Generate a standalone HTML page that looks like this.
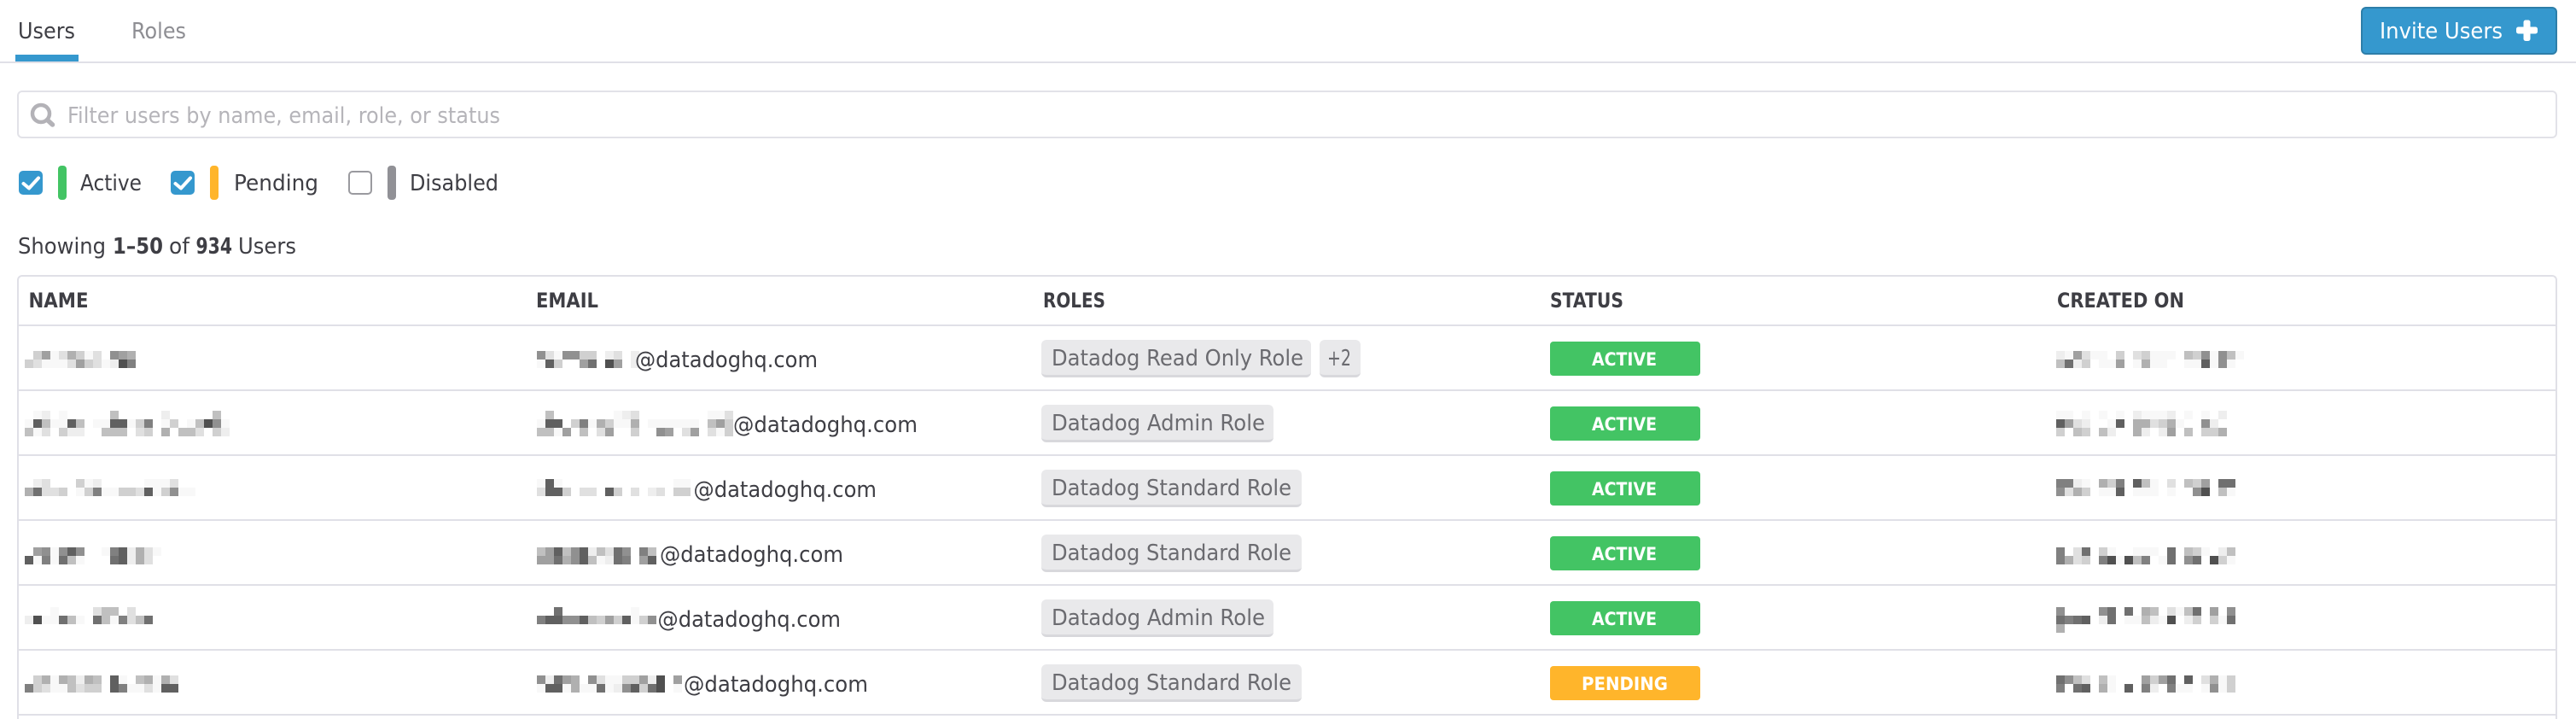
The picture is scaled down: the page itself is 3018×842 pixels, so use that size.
<!DOCTYPE html>
<html lang="en"><head><meta charset="utf-8"><title>Users</title>
<style>
html,body{margin:0;padding:0;background:#fff;width:3018px;height:842px;overflow:hidden}
.a0{position:absolute}
.l{position:absolute;left:20px;width:2976px;height:2px;background:#e0e0e7}
.tag{position:absolute;height:41px;background:#e9e9eb;border-bottom:3px solid #d8d8dc;border-radius:6px}
.st{position:absolute;left:1816px;width:176px;height:40px;border-radius:4px;background:#43c464}
.r{position:absolute;display:flex}
.r i{display:block;width:10px;height:10px;flex:none}
.a{background:#f8f8f8}.b{background:#eeeeee}.c{background:#e0e0e0}.d{background:#d0d0d0}.e{background:#c0c0c0}.f{background:#b0b0b0}.g{background:#a0a0a0}.h{background:#909090}.j{background:#808080}.k{background:#707070}.p{background:#606060}.m{background:#505050}
svg{position:absolute;left:0;top:0;display:block}
text{font-family:"DejaVu Sans","Liberation Sans",sans-serif;font-size:26px;fill:#3e3e44}
text.bd{font-weight:bold}
text.h{font-weight:bold;font-size:24px}
text.t{fill:#6b6b70}
text.s{font-weight:bold;font-size:21.5px;fill:#fff}
</style></head><body>

<div class="a0" style="left:0;top:72px;width:3018px;height:2px;background:#e0e0e7"></div>
<div class="a0" style="left:18px;top:64px;width:74px;height:8px;background:#3598ce"></div>
<div class="a0" style="left:2766px;top:8px;width:226px;height:52px;background:#3598ce;border:2px solid #2d7ea9;border-radius:6px"></div>
<div class="a0" style="left:20px;top:106px;width:2972px;height:52px;border:2px solid #e2e2e8;border-radius:6px"></div>

<div class="a0" style="left:22px;top:200px;width:28px;height:28px;background:#3598ce;border-radius:5px"></div>
<div class="a0" style="left:68px;top:194px;width:10px;height:40px;background:#43c464;border-radius:4px"></div>
<div class="a0" style="left:200px;top:200px;width:28px;height:28px;background:#3598ce;border-radius:5px"></div>
<div class="a0" style="left:246px;top:194px;width:10px;height:40px;background:#ffb52b;border-radius:4px"></div>
<div class="a0" style="left:408px;top:200px;width:24px;height:24px;border:2px solid #9a9a9f;border-radius:5px"></div>
<div class="a0" style="left:454px;top:194px;width:10px;height:40px;background:#919196;border-radius:4px"></div>

<div class="a0" style="left:20px;top:322px;width:2972px;height:518px;border:2px solid #e0e0e7;border-bottom:0;border-radius:6px 6px 0 0"></div>
<div class="l" style="top:380px"></div><div class="l" style="top:456px"></div><div class="l" style="top:532px"></div><div class="l" style="top:608px"></div><div class="l" style="top:684px"></div><div class="l" style="top:760px"></div><div class="l" style="top:836px"></div>

<div class="tag" style="left:1220px;top:398px;width:316px"></div><div class="tag" style="left:1546px;top:398px;width:48px"></div>
<div class="tag" style="left:1220px;top:474px;width:272px"></div>
<div class="tag" style="left:1220px;top:550px;width:305px"></div>
<div class="tag" style="left:1220px;top:626px;width:305px"></div>
<div class="tag" style="left:1220px;top:702px;width:272px"></div>
<div class="tag" style="left:1220px;top:778px;width:305px"></div>

<div class="st" style="top:400px"></div><div class="st" style="top:476px"></div><div class="st" style="top:552px"></div><div class="st" style="top:628px"></div><div class="st" style="top:704px"></div><div class="st" style="top:780px;background:#ffb52b"></div>

<!-- names -->
<div class="r" style="left:29px;top:411px"><i></i><i class="d"></i><i class="g"></i><i class="a"></i><i class="c"></i><i class="f"></i><i class="d"></i><i class="a"></i><i class="c"></i><i></i><i class="h"></i><i class="g"></i><i class="f"></i></div>
<div class="r" style="left:29px;top:421px"><i class="d"></i><i class="c"></i><i class="a"></i><i class="a"></i><i class="a"></i><i class="c"></i><i class="g"></i><i class="d"></i><i class="c"></i><i class="a"></i><i class="b"></i><i class="m"></i><i class="j"></i></div>

<div class="r" style="left:29px;top:481px"><i></i><i class="a"></i><i class="b"></i><i></i><i class="a"></i><i></i><i></i><i></i><i></i><i></i><i class="e"></i><i></i><i></i><i></i><i></i><i></i><i class="b"></i><i></i><i></i><i></i><i></i><i></i><i class="e"></i></div>
<div class="r" style="left:29px;top:491px"><i class="a"></i><i class="p"></i><i class="e"></i><i class="a"></i><i class="a"></i><i class="p"></i><i class="e"></i><i></i><i class="a"></i><i class="a"></i><i class="p"></i><i class="p"></i><i class="a"></i><i class="d"></i><i class="j"></i><i></i><i class="a"></i><i class="d"></i><i></i><i class="a"></i><i class="e"></i><i class="m"></i><i class="h"></i><i class="a"></i></div>
<div class="r" style="left:29px;top:501px"><i class="e"></i><i class="a"></i><i class="c"></i><i></i><i class="d"></i><i class="b"></i><i class="b"></i><i></i><i></i><i class="e"></i><i class="e"></i><i class="e"></i><i></i><i class="c"></i><i class="d"></i><i></i><i class="f"></i><i></i><i class="e"></i><i class="e"></i><i class="c"></i><i></i><i class="d"></i><i class="b"></i></div>

<div class="r" style="left:29px;top:561px"><i></i><i class="b"></i><i class="c"></i><i></i><i></i><i></i><i class="d"></i><i class="a"></i><i class="b"></i><i></i><i></i><i></i><i></i><i></i><i class="a"></i><i class="a"></i><i class="a"></i><i class="c"></i></div>
<div class="r" style="left:29px;top:571px"><i class="f"></i><i class="k"></i><i class="c"></i><i class="c"></i><i class="d"></i><i></i><i class="a"></i><i class="d"></i><i class="j"></i><i class="a"></i><i class="a"></i><i class="d"></i><i class="d"></i><i class="c"></i><i class="p"></i><i class="a"></i><i class="d"></i><i class="h"></i><i class="a"></i><i class="a"></i></div>

<div class="r" style="left:29px;top:641px"><i></i><i class="g"></i><i class="h"></i><i class="a"></i><i class="h"></i><i class="p"></i><i class="h"></i><i></i><i></i><i class="a"></i><i class="j"></i><i class="p"></i><i class="b"></i><i class="f"></i><i class="c"></i><i class="a"></i></div>
<div class="r" style="left:29px;top:651px"><i class="p"></i><i class="a"></i><i class="j"></i><i class="a"></i><i class="k"></i><i class="e"></i><i class="a"></i><i></i><i></i><i></i><i class="k"></i><i class="p"></i><i class="b"></i><i class="f"></i><i class="c"></i></div>

<div class="r" style="left:29px;top:711px"><i></i><i></i><i></i><i class="a"></i><i></i><i></i><i></i><i></i><i class="c"></i><i class="e"></i><i class="e"></i><i></i><i class="c"></i></div>
<div class="r" style="left:29px;top:721px"><i class="b"></i><i class="m"></i><i class="a"></i><i class="a"></i><i class="k"></i><i class="e"></i><i class="a"></i><i></i><i class="k"></i><i class="e"></i><i class="a"></i><i class="j"></i><i class="c"></i><i class="e"></i><i class="k"></i></div>

<div class="r" style="left:29px;top:791px"><i></i><i class="d"></i><i class="f"></i><i class="a"></i><i class="f"></i><i class="e"></i><i class="b"></i><i class="f"></i><i class="e"></i><i></i><i class="p"></i><i class="a"></i><i></i><i class="e"></i><i class="f"></i><i class="a"></i><i class="f"></i><i class="c"></i></div>
<div class="r" style="left:29px;top:801px"><i class="j"></i><i class="d"></i><i class="c"></i><i class="a"></i><i class="a"></i><i class="e"></i><i class="c"></i><i class="d"></i><i class="d"></i><i></i><i class="p"></i><i class="j"></i><i class="a"></i><i class="a"></i><i class="c"></i><i class="a"></i><i class="p"></i><i class="p"></i></div>

<!-- emails -->
<div class="r" style="left:629px;top:411px"><i class="h"></i><i class="c"></i><i class="a"></i><i class="h"></i><i class="h"></i><i class="d"></i><i class="d"></i><i></i><i class="b"></i><i class="c"></i><i></i><i class="b"></i></div>
<div class="r" style="left:629px;top:421px"><i class="a"></i><i class="p"></i><i class="d"></i><i></i><i></i><i class="g"></i><i class="k"></i><i></i><i class="m"></i><i class="g"></i><i></i><i class="b"></i></div>

<div class="r" style="left:629px;top:481px"><i></i><i class="e"></i><i></i><i></i><i></i><i></i><i></i><i></i><i></i><i class="a"></i><i class="b"></i><i class="c"></i><i></i><i></i><i></i><i></i><i></i><i></i><i></i><i></i><i class="a"></i><i class="a"></i><i class="c"></i></div>
<div class="r" style="left:629px;top:491px"><i class="a"></i><i class="p"></i><i class="p"></i><i></i><i class="d"></i><i class="j"></i><i class="a"></i><i class="f"></i><i class="d"></i><i class="a"></i><i class="a"></i><i class="f"></i><i></i><i class="a"></i><i class="a"></i><i class="a"></i><i class="a"></i><i class="a"></i><i class="a"></i><i></i><i class="e"></i><i class="g"></i><i class="d"></i></div>
<div class="r" style="left:629px;top:501px"><i class="e"></i><i class="e"></i><i class="a"></i><i class="g"></i><i></i><i class="e"></i><i></i><i class="c"></i><i class="g"></i><i></i><i></i><i class="d"></i><i></i><i></i><i class="h"></i><i class="g"></i><i></i><i class="c"></i><i class="g"></i><i></i><i class="c"></i><i class="a"></i><i class="d"></i></div>

<div class="r" style="left:629px;top:561px"><i class="a"></i><i class="p"></i><i class="a"></i><i></i><i></i><i></i><i></i><i></i><i></i><i></i><i></i><i></i><i></i><i></i><i></i><i></i><i class="a"></i><i class="a"></i></div>
<div class="r" style="left:629px;top:571px"><i class="c"></i><i class="p"></i><i class="p"></i><i class="d"></i><i></i><i class="c"></i><i class="c"></i><i></i><i class="p"></i><i class="d"></i><i></i><i class="c"></i><i></i><i class="b"></i><i class="c"></i><i></i><i class="d"></i><i class="d"></i></div>

<div class="r" style="left:629px;top:641px"><i class="e"></i><i class="g"></i><i class="p"></i><i class="e"></i><i class="h"></i><i class="p"></i><i class="b"></i><i class="e"></i><i class="c"></i><i class="k"></i><i class="h"></i><i></i><i class="j"></i><i class="e"></i></div>
<div class="r" style="left:629px;top:651px"><i class="g"></i><i class="g"></i><i class="k"></i><i class="f"></i><i class="h"></i><i class="p"></i><i class="e"></i><i class="a"></i><i class="b"></i><i class="k"></i><i class="j"></i><i></i><i class="g"></i><i class="p"></i></div>

<div class="r" style="left:629px;top:711px"><i></i><i></i><i class="k"></i><i></i><i></i><i></i><i></i><i></i><i></i><i></i><i></i><i class="a"></i></div>
<div class="r" style="left:629px;top:721px"><i class="j"></i><i class="p"></i><i class="p"></i><i class="h"></i><i class="h"></i><i class="p"></i><i class="e"></i><i class="d"></i><i class="g"></i><i class="d"></i><i class="p"></i><i class="a"></i><i class="d"></i><i class="h"></i></div>

<div class="r" style="left:629px;top:791px"><i class="h"></i><i class="b"></i><i class="k"></i><i class="g"></i><i class="f"></i><i></i><i class="h"></i><i class="c"></i><i class="a"></i><i class="a"></i><i class="d"></i><i class="d"></i><i class="g"></i><i class="b"></i><i class="m"></i><i></i><i class="g"></i></div>
<div class="r" style="left:629px;top:801px"><i class="a"></i><i class="p"></i><i class="p"></i><i class="a"></i><i class="f"></i><i class="a"></i><i class="a"></i><i class="k"></i><i class="a"></i><i class="b"></i><i class="h"></i><i class="p"></i><i class="d"></i><i class="k"></i><i class="m"></i><i></i><i class="a"></i></div>

<!-- created on -->
<div class="r" style="left:2409px;top:411px"><i class="b"></i><i class="a"></i><i class="g"></i><i class="c"></i><i class="a"></i><i class="a"></i><i></i><i class="d"></i><i></i><i class="c"></i><i class="d"></i><i class="a"></i><i class="a"></i><i class="a"></i><i></i><i class="e"></i><i class="d"></i><i class="h"></i><i class="a"></i><i class="h"></i><i class="e"></i><i class="a"></i></div>
<div class="r" style="left:2409px;top:421px"><i class="e"></i><i class="k"></i><i class="b"></i><i class="d"></i><i></i><i class="a"></i><i class="a"></i><i class="g"></i><i></i><i class="a"></i><i class="f"></i><i class="a"></i><i class="a"></i><i></i><i></i><i class="a"></i><i class="a"></i><i class="p"></i><i class="a"></i><i class="h"></i><i class="a"></i></div>

<div class="r" style="left:2409px;top:481px"><i class="a"></i><i class="a"></i><i></i><i class="a"></i><i></i><i class="a"></i><i></i><i class="a"></i><i></i><i class="b"></i><i class="a"></i><i class="a"></i><i class="a"></i><i class="b"></i><i></i><i class="a"></i><i></i><i class="a"></i><i></i><i class="b"></i></div>
<div class="r" style="left:2409px;top:491px"><i class="p"></i><i class="g"></i><i class="c"></i><i class="b"></i><i></i><i></i><i class="a"></i><i class="p"></i><i></i><i class="f"></i><i class="f"></i><i class="c"></i><i class="d"></i><i class="f"></i><i class="a"></i><i></i><i></i><i class="h"></i><i class="b"></i></div>
<div class="r" style="left:2409px;top:501px"><i class="d"></i><i></i><i class="e"></i><i class="d"></i><i></i><i class="e"></i><i class="b"></i><i></i><i></i><i class="f"></i><i class="b"></i><i></i><i class="b"></i><i class="g"></i><i></i><i class="e"></i><i></i><i class="d"></i><i class="d"></i><i class="f"></i></div>

<div class="r" style="left:2409px;top:561px"><i class="j"></i><i class="j"></i><i class="b"></i><i class="a"></i><i></i><i class="f"></i><i class="d"></i><i class="j"></i><i></i><i class="p"></i><i class="e"></i><i class="a"></i><i></i><i class="c"></i><i></i><i class="e"></i><i class="d"></i><i class="g"></i><i></i><i class="k"></i><i class="k"></i></div>
<div class="r" style="left:2409px;top:571px"><i class="h"></i><i class="c"></i><i class="f"></i><i class="d"></i><i></i><i class="a"></i><i class="a"></i><i class="p"></i><i></i><i class="a"></i><i class="a"></i><i class="a"></i><i></i><i class="a"></i><i></i><i></i><i class="h"></i><i class="m"></i><i></i><i class="e"></i><i class="a"></i></div>

<div class="r" style="left:2409px;top:641px"><i class="j"></i><i></i><i class="c"></i><i class="k"></i><i></i><i class="d"></i><i class="a"></i><i></i><i></i><i class="a"></i><i class="a"></i><i class="a"></i><i></i><i class="k"></i><i></i><i class="e"></i><i class="d"></i><i class="a"></i><i></i><i class="b"></i><i class="e"></i></div>
<div class="r" style="left:2409px;top:651px"><i class="j"></i><i class="f"></i><i class="c"></i><i class="d"></i><i></i><i class="j"></i><i class="m"></i><i class="a"></i><i class="m"></i><i class="e"></i><i class="j"></i><i></i><i class="a"></i><i class="k"></i><i></i><i class="h"></i><i class="k"></i><i></i><i class="m"></i><i class="d"></i><i class="a"></i></div>

<div class="r" style="left:2409px;top:711px"><i class="h"></i><i></i><i></i><i></i><i></i><i class="h"></i><i class="k"></i><i></i><i class="k"></i><i></i><i class="f"></i><i class="e"></i><i></i><i class="c"></i><i class="a"></i><i class="e"></i><i class="k"></i><i></i><i class="g"></i><i></i><i class="h"></i></div>
<div class="r" style="left:2409px;top:721px"><i class="k"></i><i class="j"></i><i class="k"></i><i class="p"></i><i></i><i class="b"></i><i class="k"></i><i></i><i class="a"></i><i class="a"></i><i class="e"></i><i class="b"></i><i class="a"></i><i class="m"></i><i></i><i class="b"></i><i class="d"></i><i></i><i class="d"></i><i class="a"></i><i class="k"></i></div>
<div class="r" style="left:2409px;top:731px"><i class="f"></i></div>

<div class="r" style="left:2409px;top:791px"><i class="k"></i><i class="h"></i><i class="e"></i><i class="c"></i><i></i><i class="e"></i><i class="a"></i><i></i><i></i><i></i><i class="g"></i><i class="d"></i><i class="g"></i><i class="k"></i><i></i><i class="p"></i><i></i><i class="c"></i><i class="f"></i><i class="a"></i><i class="d"></i></div>
<div class="r" style="left:2409px;top:801px"><i class="j"></i><i></i><i class="k"></i><i class="p"></i><i></i><i class="f"></i><i class="a"></i><i></i><i class="p"></i><i></i><i class="j"></i><i class="b"></i><i></i><i class="j"></i><i class="a"></i><i class="a"></i><i></i><i class="a"></i><i class="h"></i><i class="a"></i><i class="d"></i></div>

<svg width="3018" height="842" viewBox="0 0 3018 842" xmlns="http://www.w3.org/2000/svg">
<text x="21" y="45" textLength="67" lengthAdjust="spacingAndGlyphs">Users</text>
<text x="154" y="45" textLength="64" lengthAdjust="spacingAndGlyphs" style="fill:#8e8e93">Roles</text>
<text x="2788" y="45" textLength="144" lengthAdjust="spacingAndGlyphs" style="fill:#fff">Invite Users</text>
<rect x="2956.5" y="23.5" width="8" height="24.5" rx="2.5" fill="#fff"/>
<rect x="2948" y="31.5" width="25" height="8" rx="2.5" fill="#fff"/>

<circle cx="48" cy="133" r="10" fill="none" stroke="#b3b2b7" stroke-width="4.5"/>
<path d="M55.5 140.5L61.5 146" stroke="#b3b2b7" stroke-width="5.5" stroke-linecap="round"/>
<text x="79" y="144" textLength="507" lengthAdjust="spacingAndGlyphs" style="fill:#b5b4b9">Filter users by name, email, role, or status</text>

<path d="M27.5 215L34 220.5L45 208.5" fill="none" stroke="#fff" stroke-width="4" stroke-linecap="round" stroke-linejoin="round"/>
<path d="M205.5 215L212 220.5L223 208.5" fill="none" stroke="#fff" stroke-width="4" stroke-linecap="round" stroke-linejoin="round"/>
<text x="94" y="223" textLength="72" lengthAdjust="spacingAndGlyphs">Active</text>
<text x="274" y="223" textLength="99" lengthAdjust="spacingAndGlyphs">Pending</text>
<text x="480" y="223" textLength="104" lengthAdjust="spacingAndGlyphs">Disabled</text>

<text x="21" y="297" textLength="103" lengthAdjust="spacingAndGlyphs">Showing</text>
<text class="bd" x="132" y="297" textLength="59" lengthAdjust="spacingAndGlyphs">1–50</text>
<text x="198" y="297" textLength="24" lengthAdjust="spacingAndGlyphs">of</text>
<text class="bd" x="229.5" y="297" textLength="42.5" lengthAdjust="spacingAndGlyphs">934</text>
<text x="279" y="297" textLength="68" lengthAdjust="spacingAndGlyphs">Users</text>

<text class="h" x="33.5" y="360" textLength="70" lengthAdjust="spacingAndGlyphs">NAME</text>
<text class="h" x="628" y="360" textLength="73" lengthAdjust="spacingAndGlyphs">EMAIL</text>
<text class="h" x="1222" y="360" textLength="73" lengthAdjust="spacingAndGlyphs">ROLES</text>
<text class="h" x="1816" y="360" textLength="86" lengthAdjust="spacingAndGlyphs">STATUS</text>
<text class="h" x="2410" y="360" textLength="149" lengthAdjust="spacingAndGlyphs">CREATED ON</text>

<text x="744" y="430" textLength="214" lengthAdjust="spacingAndGlyphs">@datadoghq.com</text>
<text x="859" y="506" textLength="216" lengthAdjust="spacingAndGlyphs">@datadoghq.com</text>
<text x="812.5" y="582" textLength="214.5" lengthAdjust="spacingAndGlyphs">@datadoghq.com</text>
<text x="773" y="658" textLength="215" lengthAdjust="spacingAndGlyphs">@datadoghq.com</text>
<text x="770.5" y="734" textLength="214.5" lengthAdjust="spacingAndGlyphs">@datadoghq.com</text>
<text x="801" y="810" textLength="216" lengthAdjust="spacingAndGlyphs">@datadoghq.com</text>

<text class="t" x="1232" y="428" textLength="295" lengthAdjust="spacingAndGlyphs">Datadog Read Only Role</text>
<text class="t" x="1555" y="428" textLength="28" lengthAdjust="spacingAndGlyphs">+2</text>
<text class="t" x="1232" y="504" textLength="250" lengthAdjust="spacingAndGlyphs">Datadog Admin Role</text>
<text class="t" x="1232" y="580" textLength="281" lengthAdjust="spacingAndGlyphs">Datadog Standard Role</text>
<text class="t" x="1232" y="656" textLength="281" lengthAdjust="spacingAndGlyphs">Datadog Standard Role</text>
<text class="t" x="1232" y="732" textLength="250" lengthAdjust="spacingAndGlyphs">Datadog Admin Role</text>
<text class="t" x="1232" y="808" textLength="281" lengthAdjust="spacingAndGlyphs">Datadog Standard Role</text>

<text class="s" x="1865" y="428" textLength="76" lengthAdjust="spacingAndGlyphs">ACTIVE</text>
<text class="s" x="1865" y="504" textLength="76" lengthAdjust="spacingAndGlyphs">ACTIVE</text>
<text class="s" x="1865" y="580" textLength="76" lengthAdjust="spacingAndGlyphs">ACTIVE</text>
<text class="s" x="1865" y="656" textLength="76" lengthAdjust="spacingAndGlyphs">ACTIVE</text>
<text class="s" x="1865" y="732" textLength="76" lengthAdjust="spacingAndGlyphs">ACTIVE</text>
<text class="s" x="1853" y="808" textLength="101" lengthAdjust="spacingAndGlyphs">PENDING</text>
</svg>
</body></html>
